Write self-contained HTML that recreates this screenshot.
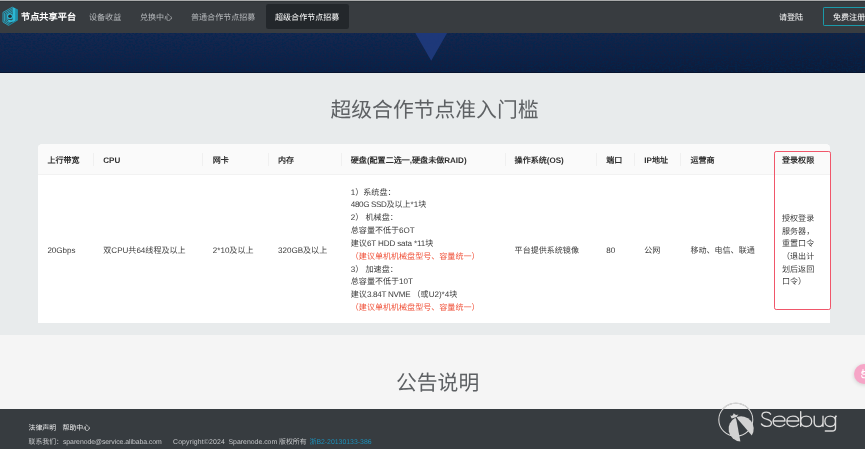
<!DOCTYPE html>
<html lang="zh-CN">
<head>
<meta charset="utf-8">
<title>节点共享平台</title>
<style>
*{box-sizing:border-box;margin:0;padding:0}
html,body{width:865px;height:449px;overflow:hidden}
body{position:relative;background:#e8ebec;font-family:"Liberation Sans",sans-serif;color:#333;-webkit-font-smoothing:antialiased;text-rendering:geometricPrecision}
.abs{position:absolute;white-space:nowrap}
/* nav */
#topline{left:0;top:0;width:865px;height:1px;background:#a9aaab;box-shadow:0 0.7px 0 #2d3134}
#nav{left:0;top:1px;width:865px;height:31.7px;background:#383c40}
.nv{font-size:8.05px;line-height:10px;top:13px;color:#b6b9bc}
#brand{left:21px;top:12.3px;font-size:9.2px;line-height:11px;font-weight:bold;color:#fff}
#active{left:266px;top:4px;width:83px;height:25px;border-radius:2.3px;background:#23272b}
#regbtn{left:823.4px;top:7.2px;width:60px;height:18.5px;border:1px solid #1b9aa9;border-radius:1.2px}
/* hero */
#hero{left:0;top:32.7px;width:865px;height:40.7px;background:linear-gradient(180deg,rgba(255,255,255,.025),rgba(0,0,0,.12)),linear-gradient(90deg,#11234d 0%,#10214a 50%,#0d1d3f 100%);overflow:hidden}
#herob{left:0;top:72.4px;width:865px;height:1px;background:#07142f}
/* headings */
.h2{left:0;width:869px;text-align:center;font-size:20.8px;line-height:24px;color:#5e6164;font-weight:normal}
/* card */
#card{left:37.75px;top:144.4px;width:792.7px;height:178.4px;background:#fff;border-radius:4.6px 4.6px 0 0;overflow:hidden}
#thead{left:0;top:0;width:100%;height:31px;background:#fafafa;border-bottom:0.6px solid #f2f2f2}
.th{font-size:8.05px;line-height:10px;top:156.4px;color:#303030;font-weight:bold}
.sep{top:153.4px;width:0.7px;height:13px;background:#f0f0f0}
.td{font-size:8.05px;line-height:12.67px;color:#3c3c3c}
.l{letter-spacing:-0.3px}
.red{color:#f0523a}
#redbox{left:773.9px;top:151.1px;width:57.2px;height:159.4px;border:1.4px solid #f0566a;border-radius:2.2px}
/* sections */
#sec2{left:0;top:335px;width:865px;height:74px;background:#f5f5f5}
#foot{left:0;top:408.6px;width:865px;height:41px;background:#373c40}
.f1{font-size:6.9px;line-height:9px;top:424.2px;color:#f2f2f2;font-weight:normal}
.f2{font-size:6.9px;line-height:9px;top:438px;color:#c6c8ca}
</style>
</head>
<body>
<div id="wrap" style="position:absolute;left:0;top:0;width:865px;height:449px;will-change:transform">
<div class="abs" id="nav"></div>
<div class="abs" id="topline"></div>
<svg class="abs" style="left:0;top:0" width="24" height="32" viewBox="0 0 24 32">
 <path d="M12.7 6.8 L17.9 9.5 V20.3 L8.6 25.8 L2.6 22.2 V12.2 Z" fill="#1c6f88" opacity="0.35"/>
 <g fill="none" stroke="#2bb6d3" stroke-width="0.75" stroke-linejoin="round">
  <path d="M12.6 7 L3 12.4 V22 L8.6 25.4"/>
  <path d="M12.6 8.6 L4.5 13.2 V21.3 L9.2 24.2"/>
  <path d="M12.6 10.2 L6 13.9 V20.6 L9.9 23"/>
  <path d="M12.6 11.8 L7.4 14.7 V19.8 L10.6 21.8"/>
 </g>
 <path d="M12.6 6.9 L15.7 8.5 V20.4 L12.6 22.2 Z" fill="#2cb8d5"/>
 <path d="M15.7 8.5 L17.9 9.6 V20.3 L8.8 25.7 L8.1 25.2 L15.7 20.6 Z" fill="#1e8fab"/>
 <path d="M8 21.2 C10 23 13 22 14.6 20 L14.6 18 C13 20.4 10.4 21 8.4 19.6 Z" fill="#2cb8d5"/>
 <circle cx="10" cy="16.2" r="2.9" fill="#2cb8d5"/>
 <circle cx="10" cy="16.2" r="1.8" fill="#2a2e33"/>
</svg>
<div class="abs" id="brand">节点共享平台</div>
<div class="abs nv" style="left:89px">设备收益</div>
<div class="abs nv" style="left:140px">兑换中心</div>
<div class="abs nv" style="left:191px">普通合作节点招募</div>
<div class="abs" id="active"></div>
<div class="abs nv" style="left:275px;color:#fff">超级合作节点招募</div>
<div class="abs nv" style="left:779px;color:#fff">请登陆</div>
<div class="abs" id="regbtn"></div>
<div class="abs nv" style="left:833px;color:#fff">免费注册</div>

<div class="abs" id="hero">
 <svg width="865" height="41" viewBox="0 0 865 41" style="position:absolute;left:0;top:0">
  <defs><filter id="nz" x="0" y="0" width="100%" height="100%"><feTurbulence type="fractalNoise" baseFrequency="0.45 0.6" numOctaves="2" seed="7"/><feColorMatrix type="matrix" values="0 0 0 0 0  0 0 0 0 0.02  0 0 0 0 0.08  0 0 0 -5 2.75"/></filter></defs>
  <rect x="0" y="0" width="865" height="41" filter="url(#nz)" opacity="0.6"/>
  <polygon points="415.3,0 447.1,0 431.2,27.7" fill="#203b80" opacity="0.88"/>
 </svg>
</div>
<div class="abs" id="herob"></div>

<div class="abs h2" style="top:99.2px">超级合作节点准入门槛</div>

<div class="abs" id="card"><div class="abs" id="thead"></div></div>

<div class="abs th" style="left:47.4px">上行带宽</div>
<div class="abs th" style="left:103.3px">CPU</div>
<div class="abs th" style="left:212.8px">网卡</div>
<div class="abs th" style="left:278px">内存</div>
<div class="abs th" style="left:350.8px">硬盘(配置二选一,硬盘未做RAID)</div>
<div class="abs th" style="left:514.6px">操作系统(OS)</div>
<div class="abs th" style="left:606.2px">端口</div>
<div class="abs th" style="left:644.3px">IP地址</div>
<div class="abs th" style="left:690.4px">运营商</div>
<div class="abs th" style="left:782px">登录权限</div>
<div class="abs sep" style="left:93.2px"></div>
<div class="abs sep" style="left:202.3px"></div>
<div class="abs sep" style="left:268px"></div>
<div class="abs sep" style="left:341px"></div>
<div class="abs sep" style="left:504.5px"></div>
<div class="abs sep" style="left:596.4px"></div>
<div class="abs sep" style="left:634.4px"></div>
<div class="abs sep" style="left:679.5px"></div>

<div class="abs td" style="left:47.4px;top:244.7px">20Gbps</div>
<div class="abs td" style="left:103.3px;top:244.7px">双CPU共64线程及以上</div>
<div class="abs td" style="left:212.8px;top:244.7px">2*10及以上</div>
<div class="abs td" style="left:278px;top:244.7px">320GB及以上</div>
<div class="abs td" style="left:350.8px;top:186.5px;line-height:12.85px">1）系统盘：<br><span style="letter-spacing:-0.36px">480G SSD</span>及以上*1块<br>2） 机械盘：<br>总容量不低于6OT<br>建议<span style="letter-spacing:-0.12px">6T HDD sata *11</span>块<br><span class="red">（建议单机机械盘型号、容量统一）</span><br>3） 加速盘：<br>总容量不低于10T<br>建议<span style="letter-spacing:-0.25px">3.84T NVME</span> （或U2)*4块<br><span class="red">（建议单机机械盘型号、容量统一）</span></div>
<div class="abs td" style="left:514.6px;top:244.7px">平台提供系统镜像</div>
<div class="abs td" style="left:606.2px;top:244.7px">80</div>
<div class="abs td" style="left:644.3px;top:244.7px">公网</div>
<div class="abs td" style="left:690.4px;top:244.7px">移动、电信、联通</div>
<div class="abs td" style="left:782px;top:212.9px">授权登录<br>服务器，<br>重置口令<br>（退出计<br>划后返回<br>口令）</div>
<div class="abs" id="redbox"></div>

<div class="abs" id="sec2"></div>
<div class="abs h2" style="top:372.2px;width:875.2px">公告说明</div>
<div class="abs" style="left:853.9px;top:363.9px;width:20.5px;height:20.5px;border-radius:50%;background:#f6a5c7;box-shadow:0 1px 4px rgba(0,0,0,.16)"></div>
<svg class="abs" style="left:858px;top:367px" width="8" height="14" viewBox="858 367 8 14"><path d="M866 371.5 H862.4 C861.4 372.3 861.6 373.8 863 374.2 H866 M863 369.4 V372.8 M861.7 375.4 C861.7 377.1 862.7 377.8 864.1 377.8 H866" fill="none" stroke="#fff" stroke-width="1.05" stroke-linecap="round"/></svg>

<div class="abs" id="foot"></div>
<svg class="abs" style="left:700px;top:395px;filter:drop-shadow(0.6px 0.8px 0.6px rgba(0,0,0,.35))" width="165" height="54" viewBox="700 395 165 54">
 <ellipse cx="735.8" cy="419.7" rx="17" ry="16.4" fill="none" stroke="#d8d8d8" stroke-width="1.1"/>
 <g fill="#d2d2d2">
  <path d="M736.4 419.7 L735.4 417.7 A12.6 12.6 0 0 0 740.4 441.5 Z"/>
  <path d="M737.6 419.1 L736.6 417.1 A12.6 12.6 0 0 1 751.8 435.6 Z"/>
  <path d="M731.6 418.2 A3 3 0 0 1 737 415.8 Z"/>
  <path d="M730.2 415.6 L732.6 416 L733.9 413 L735.3 415.2 L738.4 414.6 L736.6 417 L731.8 418.6 Z"/>
 </g>
 <g fill="none" stroke="#dcdcdc" stroke-width="1.4" stroke-linecap="round" stroke-linejoin="round" transform="translate(0 426.5) scale(1 0.955) translate(0 -426.5)">
  <path d="M770.6 413.6 C769.8 412.2 768.2 411.5 766.3 411.5 C763.8 411.5 762 412.9 762 415 C762 417.3 764 418.1 766.5 418.8 C769.2 419.6 771.4 420.4 771.4 422.8 C771.4 425 769.3 426.4 766.6 426.4 C764.2 426.4 762.3 425.4 761.4 423.8"/>
  <path id="ee" d="M773.2 420.7 H785 C785 417.6 782.6 415.6 779.2 415.6 C775.6 415.6 773.1 417.9 773.1 421.1 C773.1 424.3 775.6 426.5 779.3 426.5 C781.6 426.5 783.6 425.6 784.6 424.2"/>
  <path transform="translate(13.75 0)" d="M773.2 420.7 H785 C785 417.6 782.6 415.6 779.2 415.6 C775.6 415.6 773.1 417.9 773.1 421.1 C773.1 424.3 775.6 426.5 779.3 426.5 C781.6 426.5 783.6 425.6 784.6 424.2"/>
  <path d="M800.7 410.9 V426.3 M800.7 421 C800.7 417.8 803 415.6 806.2 415.6 C809.4 415.6 811.7 417.8 811.7 421 C811.7 424.2 809.4 426.5 806.2 426.5 C803 426.5 800.7 424.2 800.7 421"/>
  <path d="M814.2 415.8 V422 C814.2 424.8 816 426.5 818.6 426.5 C821.2 426.5 823 424.8 823 422 M823 415.8 V426.3"/>
  <path d="M835.5 421 C835.5 417.8 833.3 415.6 830.2 415.6 C827.1 415.6 824.9 417.8 824.9 421 C824.9 424.2 827.1 426.5 830.2 426.5 C833.3 426.5 835.5 424.2 835.5 421 M836.3 415.8 H835.5 V428 C835.5 430.2 834.3 431.2 832.2 431.2 H825.3"/>
 </g>
</svg>
<div class="abs f1" style="left:28.5px">法律声明</div>
<div class="abs f1" style="left:62.5px">帮助中心</div>
<div class="abs f2" style="left:28.5px">联系我们：<span style="letter-spacing:-0.06px">sparenode@service.alibaba.com</span></div>
<div class="abs f2" style="left:173px;letter-spacing:0.15px">Copyright©2024</div>
<div class="abs f2" style="left:228.5px">Sparenode.com 版权所有</div>
<div class="abs f2" style="left:309.5px;color:#1d8fb8">浙B2-20130133-386</div>
</div>
</body>
</html>
